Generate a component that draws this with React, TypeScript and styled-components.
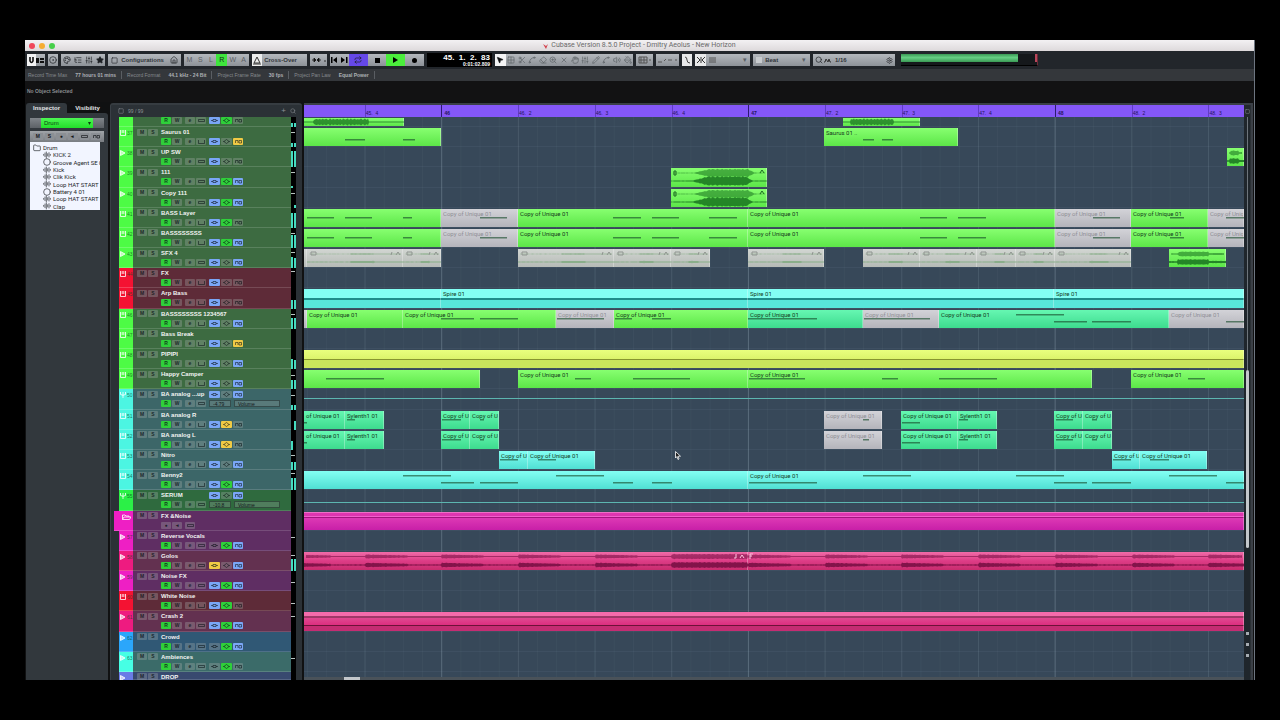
import React from "react";
import styled, { createGlobalStyle } from "styled-components";
import {
  AudioLines,
  Circle,
  CircleDot,
  Eraser,
  Folder,
  Grid2x2,
  Hand,
  House,
  ListTree,
  MousePointer2,
  PaintBucket,
  Palette,
  Pencil,
  Repeat,
  Scissors,
  Search,
  Settings,
  SlidersVertical,
  Spline,
  Square,
  Star,
  Volume2,
  X,
  ZoomIn,
} from "lucide-react";

const GlobalStyle = createGlobalStyle`
  *, *::before, *::after { box-sizing: border-box; }
  body { margin: 0; background: #000; font-family: "Liberation Sans", Arial, sans-serif; font-size: 6px; }
  button, select, input { font: inherit; color: inherit; border: 0; border-radius: 0; margin: 0; padding: 0; background: none; }
  ul { list-style: none; margin: 0; padding: 0; }
  svg { flex: none; }
`;

/* ---------- window frame ---------- */

const Page = styled.div`
  min-height: 100vh;
  display: flex;
  padding: 40px 25px;
  background: #000;
`;

const AppWindow = styled.main`
  flex: 1;
  min-width: 0;
  display: flex;
  flex-direction: column;
  background: #101112;
  border-right: 1px solid #6d7580;
`;

const TitleBar = styled.header`
  display: flex;
  align-items: center;
  height: 11px;
  padding: 0 4px;
  color: #6a6a6a;
  background: linear-gradient(#f3f1f3, #ddd9db);
`;

const Lights = styled.div`
  display: flex;
  gap: 4px;
  flex: 1;
`;

const Light = styled.button<{ $color: string }>`
  width: 6px;
  height: 6px;
  border-radius: 50%;
  background: ${(p) => p.$color};
`;

const Title = styled.h1`
  display: flex;
  align-items: center;
  gap: 3px;
  margin: 0;
  font: 400 7px/11px Roboto, sans-serif;
`;

const TitleEnd = styled.div`
  flex: 1;
`;

/* ---------- toolbar ---------- */

const Toolbar = styled.div`
  display: flex;
  align-items: center;
  height: 18px;
  padding: 0 2px;
  gap: 3px;
  background: #22262b;
  overflow: hidden;
  color: #22262a;
`;

const Group = styled.div<{ $w: number; $pad?: number }>`
  display: flex;
  flex: none;
  align-items: stretch;
  width: ${(p) => p.$w}px;
  height: 12px;
  padding: 0 ${(p) => p.$pad ?? 0}px;
  background: linear-gradient(#b4b8bd, #8d9298);
  overflow: hidden;
`;

const Tool = styled.button<{ $bg?: string; $dim?: boolean; $grow?: number; $left?: boolean }>`
  flex: ${(p) => p.$grow ?? 1};
  min-width: 0;
  display: flex;
  align-items: center;
  justify-content: ${(p) => (p.$left ? "flex-start" : "center")};
  font-size: 7px;
  line-height: 12px;
  background: ${(p) => p.$bg ?? "transparent"};
  color: ${(p) => (p.$dim ? "#5b6065" : "#1b1e22")};
`;

const ToolSelect = styled.select<{ $grow: number }>`
  flex: ${(p) => p.$grow};
  min-width: 0;
  appearance: none;
  padding: 0 2px;
  font-size: 6px;
  font-weight: 700;
  line-height: 12px;
  color: #303439;
`;

const TimeBox = styled.div`
  flex: none;
  display: flex;
  flex-direction: column;
  align-items: flex-end;
  justify-content: center;
  width: 65px;
  height: 14px;
  padding-right: 2px;
  background: #000;
  color: #fff;
  font-weight: 700;
`;

const TimeMain = styled.span`
  font-size: 8px;
  line-height: 8px;
  white-space: pre;
`;

const TimeSub = styled.span`
  font-size: 5px;
  line-height: 5px;
`;

const MasterMeter = styled.div`
  display: flex;
  flex: none;
  width: 137px;
  height: 12px;
  margin-left: 3px;
  border-bottom: 1px solid #000;
  border-right: 1px solid #6b2a38;
  padding-bottom: 3px;
  background: #15181b;
`;

const MasterLevel = styled.div`
  width: 86%;
  background: linear-gradient(#3a9a55, #66cf84 45%, #3a9a55);
`;

const MasterClip = styled.div`
  width: 2px;
  margin-left: auto;
  background: #b8465a;
`;

/* ---------- info lines ---------- */

const InfoLine = styled.dl`
  display: flex;
  align-items: center;
  height: 12px;
  margin: 0;
  padding: 0 3px;
  background: #34373b;
  white-space: nowrap;
  line-height: 12px;
`;

const InfoItem = styled.div`
  display: flex;
  height: 8px;
  line-height: 8px;
  gap: 8px;
  padding-right: 5px;
  margin-right: 5px;
  border-right: 1px solid #5a5e63;
  font-size: 5px;
`;

const InfoKey = styled.dt`
  color: #85898d;
`;

const InfoValue = styled.dd`
  margin: 0;
  color: #adb0b4;
  font-weight: 700;
`;

const NoObject = styled.p`
  margin: 0;
  height: 21px;
  padding-left: 2px;
  line-height: 20px;
  font-weight: 700;
  font-size: 5px;
  color: #8b8d90;
  background: #121213;
`;

const Body = styled.div`
  flex: 1;
  display: flex;
  min-height: 0;
  gap: 2px;
  padding-top: 1px;
  padding-right: 1px;
`;

/* ---------- inspector ---------- */

const Inspector = styled.aside`
  flex: none;
  width: 83px;
  display: flex;
  flex-direction: column;
  padding-left: 1px;
`;

const Tabs = styled.div`
  display: flex;
  height: 10px;
`;

const Tab = styled.button<{ $active?: boolean }>`
  flex: 1;
  border-radius: 3px 3px 0 0;
  background: ${(p) => (p.$active ? "#32383d" : "transparent")};
  color: #e6e7e8;
  font-weight: 700;
  font-size: 6px;
  line-height: 10px;
`;

const InspectorPanel = styled.div`
  flex: 1;
  display: flex;
  flex-direction: column;
  gap: 3px;
  padding: 5px 4px 0;
  background: #32383d;
  border-radius: 0 3px 0 0;
`;

const TrackTitle = styled.div`
  display: flex;
  justify-content: center;
  height: 10px;
  color: #0b3f10;
  background: linear-gradient(#80858a, #5c6166);
`;

const TrackTitleField = styled.div`
  display: flex;
  align-items: center;
  width: 52px;
  padding-right: 2px;
  background: linear-gradient(#4df853, #22e02a);
`;

const TrackTitleSelect = styled.select`
  flex: 1;
  min-width: 0;
  appearance: none;
  padding: 0 3px;
  line-height: 9px;
`;

const FolderBox = styled.section`
  padding-right: 4px;
`;

const FolderTools = styled.div`
  display: flex;
  align-items: center;
  gap: 2px;
  height: 11px;
  margin-right: -4px;
  padding: 0 3px;
  background: linear-gradient(#a0a4a8, #797d82);
`;

const FolderTool = styled.button`
  flex: 1;
  height: 7px;
  display: flex;
  align-items: center;
  justify-content: center;
  font-size: 5px;
  font-weight: 700;
  line-height: 7px;
  background: #8b8f94;
  color: #15181b;
`;

const FolderList = styled.ul`
  display: grid;
  grid-auto-rows: 1fr;
  height: 68px;
  padding: 2px 0 0 3px;
  overflow: hidden;
  background: #f2f5ff;
  color: #23262a;
`;

const FolderItem = styled.li<{ $root?: boolean }>`
  display: flex;
  align-items: center;
  gap: 2px;
  padding-left: ${(p) => (p.$root ? 0 : 10)}px;
  font: 400 6px/7px Roboto, "Liberation Sans", sans-serif;
  white-space: nowrap;
  min-height: 0;
`;

/* ---------- track list ---------- */

const rowTemplate = (last: number) =>
  `grid-template-rows: 10px repeat(27, minmax(20px, 1fr)) ${last}px;`;

const TrackPanel = styled.section`
  flex: none;
  width: 192px;
  display: flex;
  flex-direction: column;
  padding: 0 6px 0 3px;
  background: #2b3136;
  border-top: 2px solid #363c41;
  border-left: 1px solid #3a4046;
  border-radius: 3px 3px 0 0;
`;

const TrackHeader = styled.div`
  display: flex;
  align-items: center;
  gap: 4px;
  height: 12px;
  padding: 0 0 0 4px;
  color: #8d9196;
  font-size: 5px;
  line-height: 12px;
`;

const HeaderTool = styled.button<{ $push?: boolean }>`
  display: flex;
  margin-left: ${(p) => (p.$push ? "auto" : "0")};
  font-size: 8px;
  line-height: 8px;
`;

const TrackRows = styled.ol`
  flex: 1;
  display: grid;
  ${rowTemplate(8)}
  margin: 0;
  padding: 0;
  list-style: none;
`;

const TrackRow = styled.li`
  display: flex;
  min-height: 0;
  overflow: hidden;
`;

const Strip = styled.div<{ $color: string; $wide?: boolean }>`
  flex: none;
  display: flex;
  gap: 1px;
  width: ${(p) => (p.$wide ? 19 : 14)}px;
  margin-left: ${(p) => (p.$wide ? 0 : 5)}px;
  height: 100%;
  min-height: 10px;
  padding: ${(p) => (p.$wide ? "3px 2px 0 8px" : "3px 0 0 1px")};
  background: ${(p) => p.$color};
  border-bottom: 1px solid rgba(255, 255, 255, 0.2);
  font-size: 5px;
  line-height: 6px;
  color: rgba(10, 70, 30, 0.7);
`;

const TrackBody = styled.div<{ $color: string }>`
  flex: 1;
  min-width: 0;
  display: flex;
  flex-direction: column;
  gap: 1px;
  padding: 0 4px;
  background: ${(p) => p.$color};
  border-bottom: 1px solid rgba(255, 255, 255, 0.15);
`;

const TrackLine = styled.div<{ $indent?: boolean }>`
  display: flex;
  align-items: center;
  gap: ${(p) => (p.$indent ? 3 : 2)}px;
  height: ${(p) => (p.$indent ? 7 : 10)}px;
  flex: none;
  padding-left: ${(p) => (p.$indent ? 24 : 0)}px;
`;

const Cluster = styled.div`
  display: flex;
  gap: 1px;
  height: 7px;
`;

const STATE: Record<string, string> = {
  g: "#2fcf3a",
  b: "#7aa6f6",
  y: "#f0ca45",
  o: "rgba(170,178,174,0.32)",
};

const Mini = styled.button<{ $state?: string; $wide?: boolean }>`
  display: flex;
  align-items: center;
  justify-content: center;
  width: ${(p) => (p.$wide ? 11 : 10)}px;
  height: 7px;
  border-radius: 1px;
  background: ${(p) => STATE[p.$state ?? "o"]};
  color: rgba(8, 16, 20, 0.8);
  font-size: 5px;
  font-weight: 700;
  line-height: 7px;
`;

const TrackName = styled.span<{ $fixed?: boolean }>`
  width: ${(p) => (p.$fixed ? "47px" : "auto")};
  padding-left: 1px;
  color: #f1f3f1;
  font-weight: 700;
  font-size: 6px;
  line-height: 10px;
  white-space: nowrap;
`;

const ValueField = styled.input<{ $w: number }>`
  width: ${(p) => p.$w}px;
  height: 7px;
  padding: 0 3px;
  border: 1px solid rgba(10, 20, 20, 0.45);
  background: rgba(160, 170, 166, 0.3);
  color: #10181a;
  font-size: 5px;
  line-height: 5px;
`;

const Meter = styled.div<{ $peak?: number }>`
  flex: none;
  display: flex;
  align-items: flex-end;
  gap: 1px;
  width: 5px;
  height: 100%;
  min-height: 10px;
  background: ${(p) =>
    p.$peak ? `linear-gradient(#b9c4c2, #b9c4c2) 0 ${p.$peak}px / 4px 1px no-repeat #000` : "#000"};
`;

const MeterBar = styled.div<{ $h: number }>`
  width: 2px;
  height: ${(p) => p.$h}px;
  background: #46dcc0;
`;

/* ---------- arrangement ---------- */

const Arrange = styled.section`
  flex: 1;
  min-width: 0;
  display: grid;
  grid-template-columns: minmax(0, 1fr) 6px;
  grid-template-rows: 12px minmax(0, 1fr) 3px;
  padding-right: 1px;
  border-top: 2px solid #3a3f46;
  border-right: 2px solid #3a3f46;
  background: #2b3136;
`;

const Ruler = styled.div`
  display: grid;
  grid-template-columns: 607fr repeat(11, minmax(0, 767fr)) 356fr;
  background: #8457f8;
  overflow: hidden;
`;

const RulerMark = styled.span<{ $bar?: boolean }>`
  display: flex;
  align-items: flex-end;
  padding-left: ${(p) => (p.$bar ? 2 : 0)}px;
  border-left: 1px solid ${(p) => (p.$bar ? "#2d1a70" : "rgba(60,35,150,.5)")};
  color: #24145c;
  font-size: 5px;
  line-height: 7px;
  font-weight: ${(p) => (p.$bar ? 700 : 400)};
  white-space: pre;
`;

const LaneArea = styled.div`
  position: relative;
  display: grid;
  ${rowTemplate(5)}
  background: #374859;
`;

const Backdrop = styled.svg`
  position: absolute;
  inset: 0;
  width: 100%;
  height: 100%;
`;

const Lane = styled.div`
  position: relative;
  display: flex;
  min-height: 0;
  overflow: hidden;
  border-bottom: 1px solid rgba(160, 190, 210, 0.07);
`;

const CLIP: Record<string, string> = {
  green: "linear-gradient(#87ff70, #5ce648)",
  grey: "linear-gradient(#d3d3d8, #b4b4bb)",
  wave: "linear-gradient(#d2d6d2, #b5bab6)",
  cyan: "linear-gradient(#83fff3, #50dfd3)",
  spire: "linear-gradient(#83fff3 50%, #1f8d8a 50%, #1f8d8a 56%, #58e6da 56%)",
  mint: "linear-gradient(#66f7b2, #3ddb8e)",
  yellow: "linear-gradient(#e9ff7e, #dcf46c 48%, #87952f 48%, #87952f 54%, #c9e55c 54%)",
  magenta:
    "linear-gradient(#ee70c6 0 8%, #de35b0 8% 24%, #f160cc 24% 30%, #a3157f 30% 36%, #dc38b4 36%, #c81fa8)",
  rose: "linear-gradient(#f06ca8, #dd3c86 50%, #c82c6e)",
  roseline:
    "linear-gradient(#f56bab 0 22%, #a03868 22% 30%, #e04a92 30%, #dd3080 66%, #6e1238 66% 73%, #c52c72 73%)",
};

const Clip = styled.div<{ $kind: string }>`
  flex: none;
  margin-top: 1px;
  padding: 1px 0 0 2px;
  overflow: hidden;
  white-space: nowrap;
  background: ${(p) => CLIP[p.$kind]};
  border-right: 1px solid rgba(255, 255, 255, 0.3);
  color: ${(p) => (p.$kind === "grey" ? "#8f8f96" : "#143a1c")};
  font: 400 6px/8px Roboto, "Liberation Sans", sans-serif;
`;

const Overlay = styled.svg`
  position: absolute;
  inset: 0;
  width: 100%;
  height: 20px;
`;

const AutomationLine = styled.div<{ $top: number }>`
  flex: 1;
  height: 1px;
  margin-top: ${(p) => p.$top}px;
  background: #5cb5b0;
`;

const Cursor = styled.svg`
  position: absolute;
  left: 40%;
  top: 60%;
  width: 6px;
  height: 9px;
  margin: -2px 0 0 -5px;
`;

const ScrollColumn = styled.div`
  display: flex;
  flex-direction: column;
  align-items: center;
  background: #1f262c;
`;

const ScrollTrack = styled.div`
  flex: 253;
  width: 1px;
  background: #6d757c;
`;

const ScrollThumb = styled.div`
  flex: 177;
  width: 3px;
  border-radius: 2px;
  background: #c3c7cb;
`;

const ScrollRest = styled.div`
  flex: 109;
  display: flex;
  flex-direction: column;
  justify-content: flex-end;
  gap: 8px;
  padding-bottom: 20px;
`;

const Knob = styled.span`
  width: 3px;
  height: 3px;
  background: #a6acb2;
`;

const CornerButton = styled.button`
  display: flex;
  align-items: center;
  justify-content: center;
  background: #22282d;
  color: #9a9fa4;
`;

const HScroll = styled.div`
  display: flex;
  align-items: center;
  padding-left: 40px;
  background: #4a5259;
`;

const HThumb = styled.div`
  width: 16px;
  height: 3px;
  background: #c3c7cb;
`;

/* ---------- data ---------- */

interface Track {
  name: string;
  type: "midi" | "audio" | "auto" | "folder";
  strip: string;
  body: string;
  s: string;
  m: [number, number];
  peak: number;
  value?: string;
}

const P = {
  green: ["#4dfb45", "#3d6b41"],
  red: ["#f41232", "#5e2b38"],
  teal: ["#4cf5e2", "#3c6668"],
  serum: ["#2bf047", "#2f6a3e"],
  purple: ["#ee1fc4", "#5f2e63"],
  pink: ["#ee1b80", "#633150"],
  blue: ["#2ba6fb", "#305875"],
  aqua: ["#46ffe4", "#3b6b69"],
  indigo: ["#6a7ce6", "#38496f"],
};

const t = (
  name: string,
  type: Track["type"],
  color: keyof typeof P,
  s: string,
  m: [number, number],
  peak = 0,
  value?: string
): Track => ({ name, type, strip: P[color][0], body: P[color][1], s, m, peak, value });

const TRACKS: Track[] = [
  t("Saurus 01", "midi", "green", "boy", [4, 4], 5),
  t("UP SW", "audio", "green", "boo", [16, 16]),
  t("111", "audio", "green", "bgb", [2, 0], 5),
  t("Copy 111", "audio", "green", "bgb", [0, 3], 5),
  t("BASS Layer", "midi", "green", "bgo", [15, 15]),
  t("BASSSSSSSS", "midi", "green", "bgb", [13, 13], 5),
  t("SFX 4", "audio", "green", "bob", [11, 10], 4),
  t("FX", "midi", "red", "boo", [0, 0], 3),
  t("Arp Bass", "midi", "red", "boo", [9, 9]),
  t("BASSSSSSSS 1234567", "midi", "green", "bob", [11, 11], 5),
  t("Bass Break", "midi", "green", "boy", [0, 0]),
  t("PIPIPI", "midi", "green", "bob", [10, 9]),
  t("Happy Camper", "midi", "green", "bob", [9, 9], 6),
  t("BA analog ...up", "auto", "teal", "bob", [5, 5], 6, "-4.79"),
  t("BA analog R", "midi", "teal", "byo", [0, 9]),
  t("BA analog L", "midi", "teal", "byo", [9, 0]),
  t("Nitro", "midi", "teal", "bob", [8, 8], 5),
  t("Benny2", "midi", "teal", "bgb", [12, 12], 3),
  t("SERUM", "auto", "serum", "bob", [0, 0], 0, "-10.8"),
  t("FX &Noise", "folder", "purple", "", [0, 0]),
  t("Reverse Vocals", "audio", "purple", "ogb", [0, 0], 6),
  t("Golos", "audio", "pink", "yob", [12, 12], 4),
  t("Noise FX", "audio", "purple", "bgb", [0, 0], 11),
  t("White Noise", "midi", "red", "bgo", [0, 0], 12),
  t("Crash 2", "audio", "pink", "bgb", [0, 0], 5),
  t("Crowd", "audio", "blue", "ogb", [0, 0]),
  t("Ambiences", "audio", "aqua", "ogo", [0, 0], 6),
];

/* Clips and notes are placed on a timeline whose visible part is START..START+SPAN. */
const START = 304;
const SPAN = 940;

type ClipData = [from: number, to: number, kind: string, label?: string];
type Note = [from: number, to: number, y: number];
type Wave = [from: number, to: number, shape: string];

interface LaneData {
  clips?: ClipData[];
  notes?: Note[];
  waves?: Wave[];
  line?: number;
}

const U = "Copy of Unique 01";
const SHORT = "Copy of U";

const bass: LaneData = {
  clips: [
    [304, 441, "green"],
    [441, 518, "grey", U],
    [518, 748, "green", U],
    [748, 1055, "green", U],
    [1055, 1131, "grey", U],
    [1131, 1208, "green", U],
    [1208, 1244, "grey", "Copy of Uniq"],
  ],
  notes: [
    [307, 334, 10], [345, 372, 10], [403, 412, 10], [480, 507, 10], [613, 641, 10], [652, 679, 10],
    [709, 737, 10], [920, 947, 10], [958, 986, 10], [1093, 1120, 10], [1170, 1184, 10], [1226, 1244, 10],
  ],
};

const analog: LaneData = {
  clips: [
    [304, 345, "mint", "of Unique 01"],
    [345, 384, "mint", "Sylenth1 01"],
    [441, 470, "mint", SHORT],
    [470, 499, "mint", SHORT],
    [824, 882, "grey", U],
    [901, 958, "mint", U],
    [958, 997, "mint", "Sylenth1 01"],
    [1054, 1083, "mint", SHORT],
    [1083, 1112, "mint", SHORT],
  ],
  notes: [
    [304, 307, 13], [347, 355, 10], [442, 461, 10], [480, 484, 10], [863, 869, 10], [902, 920, 13],
    [959, 968, 10], [1056, 1073, 10], [1092, 1097, 10],
  ],
};

const copy111: LaneData = {
  clips: [[671, 767, "green"]],
  waves: [[671, 767, "swell"]],
};

const sfxSpans: [number, number][] = [
  [304, 307], [307, 403], [403, 441], [518, 614], [614, 671], [671, 710], [748, 824],
  [863, 920], [920, 977], [977, 1016], [1016, 1055], [1055, 1131],
];

const LANES: LaneData[] = [
  {
    clips: [[304, 441, "green"], [824, 958, "green", "Saurus 01 .."]],
    notes: [[345, 365, 13], [403, 415, 13], [863, 874, 13], [882, 893, 13]],
  },
  { clips: [[1227, 1244, "green"]], waves: [[1227, 1244, "burst"]] },
  copy111,
  copy111,
  bass,
  bass,
  {
    clips: [...sfxSpans.map(([a, b]): ClipData => [a, b, "wave"]), [1169, 1226, "green"]],
    waves: [...sfxSpans.slice(1).map(([a, b]): Wave => [a, b, "faint"]), [1169, 1226, "burst"]],
  },
  {},
  {
    clips: [
      [304, 441, "spire"],
      [441, 748, "spire", "Spire 01"],
      [748, 1054, "spire", "Spire 01"],
      [1054, 1244, "spire", "Spire 01"],
    ],
  },
  {
    clips: [
      [304, 307, "grey"],
      [307, 403, "green", U],
      [403, 556, "green", U],
      [556, 614, "grey", U],
      [614, 748, "green", U],
      [748, 863, "mint", U],
      [863, 939, "grey", U],
      [939, 1169, "mint", U],
      [1169, 1244, "grey", U],
    ],
    notes: [
      [441, 474, 10], [480, 518, 10], [557, 604, 10], [615, 632, 10], [652, 671, 10], [748, 817, 10],
      [864, 930, 10], [1016, 1064, 6], [1054, 1087, 13], [1092, 1131, 13], [1226, 1244, 13],
    ],
  },
  {},
  { clips: [[304, 1244, "yellow"]] },
  {
    clips: [
      [304, 480, "green"],
      [518, 748, "green", U],
      [748, 1092, "green", U],
      [1131, 1244, "green", U],
    ],
    notes: [
      [326, 384, 10], [575, 591, 10], [633, 690, 10], [749, 805, 10], [882, 898, 10], [939, 997, 10],
      [1188, 1205, 10],
    ],
  },
  { line: 9 },
  analog,
  analog,
  {
    clips: [[499, 528, "cyan", SHORT], [528, 595, "cyan", U], [1112, 1140, "cyan", SHORT], [1140, 1207, "cyan", U]],
    notes: [[500, 518, 10], [538, 556, 10], [1113, 1131, 10], [1150, 1169, 10]],
  },
  {
    clips: [[304, 748, "cyan"], [748, 1244, "cyan", U]],
    notes: [
      [403, 451, 6], [556, 604, 6], [863, 911, 6], [1016, 1064, 6], [1169, 1217, 6], [441, 474, 13],
      [480, 518, 13], [613, 633, 13], [652, 672, 13], [749, 817, 13], [1054, 1087, 13], [1092, 1131, 13],
      [1226, 1244, 13],
    ],
  },
  { line: 12 },
  { clips: [[304, 1244, "magenta"]] },
  {},
  { clips: [[304, 748, "rose"], [748, 1244, "rose"]], waves: [[304, 1244, "voice"]] },
  {},
  {},
  { clips: [[304, 1244, "roseline"]] },
  {},
  {},
];

/* ---------- drawings ---------- */

const jitter = (x: number) => 0.75 + 0.25 * Math.abs(Math.sin(x * 1.9) * Math.cos(x * 0.73 + 1));

function level(shape: string, x: number, from: number, to: number): number {
  const r = (x - from) / (to - from);
  switch (shape) {
    case "swell": {
      if (x < from + 22) return 0.5;
      if (x < from + 36) return 0.8 + ((x - from - 22) / 14) * 4.4;
      if (x < from + 76) return 5.4;
      if (x < from + 82) return 4.5 - (x - from - 76) * 0.7;
      return 0.5;
    }
    case "burst":
      return r < 0.15 ? 1 : r < 0.7 ? 3.2 : 1.4;
    case "top":
      return r < 0.1 ? 0.6 : r < 0.65 ? 2.4 + 1.4 * Math.abs(Math.sin(x * 0.9)) : 0.6;
    case "faint":
      return r < 0.45 ? 0.5 : r < 0.7 ? 1.3 : 0.6;
    default: {
      if (x > 671 && x < 748) return 3.4;
      const beat = (x - 365 + 767) % 76.7;
      return beat < 42 ? 2.8 - beat * 0.03 : 0.8;
    }
  }
}

function wavePath(from: number, to: number, mid: number, shape: string, gain: number) {
  const up: string[] = [];
  const down: string[] = [];
  for (let x = from; x <= to; x += 1) {
    const a = level(shape, x, from, to) * jitter(x) * gain;
    up.push(`${x},${(mid - a).toFixed(1)}`);
    down.unshift(`${x},${(mid + a).toFixed(1)}`);
  }
  return `M${up.join("L")}L${down.join("L")}Z`;
}

const waveColor = (shape: string) =>
  shape === "voice" ? "#7a0f45" : shape === "faint" ? "#84ac84" : "#1d7a22";

function LaneRow({ clips = [], notes = [], waves = [], line }: LaneData) {
  let end = START;
  return (
    <Lane>
      {clips.map(([from, to, kind, label]) => {
        const gap = from - end;
        end = to;
        return (
          <Clip
            key={from}
            $kind={kind}
            style={{ marginLeft: `${(gap / SPAN) * 100}%`, width: `${((to - from) / SPAN) * 100}%` }}
          >
            {label}
          </Clip>
        );
      })}
      {line !== undefined && <AutomationLine $top={line} />}
      {(notes.length > 0 || waves.length > 0) && (
        <Overlay viewBox={`${START} 0 ${SPAN} 20`} preserveAspectRatio="none" aria-hidden="true">
          {notes.map(([a, b, y]) => (
            <rect key={`${a}-${y}`} x={a} y={y - 1} width={b - a} height={1.5} fill="#164a2a" opacity={0.62} />
          ))}
          {waves.map(([a, b, shape]) => (
            <g key={a} fill={waveColor(shape)}>
              <path d={wavePath(a + 2, b - 2, shape === "voice" ? 5.5 : 6, shape, 0.8)} opacity={0.6} />
              <path d={wavePath(a, b, 14, shape, 0.9)} opacity={0.9} />
              {shape === "voice" && (
                <g stroke="#ffc4e0" fill="none" strokeWidth={1}>
                  <path d="M736 3v4M734 7h2M740 7l2-3 2 3M750 3v5M750 3h3M750 5h2" />
                </g>
              )}
              {shape === "faint" && b - a > 30 && (
                <path d={`M${a + 4} 4h5v3h-5zM${b - 12} 7l1-3M${b - 7} 7l2-3 2 3`} stroke="#8f9590" fill="none" />
              )}
              {shape === "swell" && (
                <path d={`M${a + 3} 4h2v4h-2zM${b - 7} 6l2-3 2 3`} stroke="#1d6a22" fill="none" />
              )}
            </g>
          ))}
        </Overlay>
      )}
    </Lane>
  );
}

function TypeIcon({ type }: { type: Track["type"] }) {
  const d = {
    midi: "M0.5 0V5.5H5.5V0M2.2 0V3M3.8 0V3",
    audio: "M0.5 0.5L5 3L0.5 5.5Z",
    auto: "M0.5 0V2.5Q3 4 5.5 2.5V0M3 0V6",
    folder: "M0.5 5.5V1H3L4 2H7V3M0.5 5.5L2 3H9L7.5 5.5Z",
  }[type];
  return (
    <svg width={type === "folder" ? 9 : 6} height="6" aria-hidden="true">
      <path d={d} stroke="#fff" strokeOpacity="0.8" fill={type === "audio" ? "#ffffffa0" : "none"} />
    </svg>
  );
}

const MINI_PATHS = {
  eyes: "M0 2.5H2M5 2.5H7M2 1.5H5V3.5H2Z",
  diamond: "M3.5 0.5L6 2.5L3.5 4.5L1 2.5ZM0 2.5H1M6 2.5H7",
  insert: "M0.5 4V1.5H3V4M4 1.5H6.5V4H4Z",
  keys: "M0.5 1V4.5H6.5V1",
  link: "M0.5 1.5H6.5V3.5H0.5Z",
};

function MiniIcon({ name }: { name: keyof typeof MINI_PATHS }) {
  return (
    <svg width="7" height="5" aria-hidden="true">
      <path d={MINI_PATHS[name]} fill="none" stroke="currentColor" strokeWidth="0.9" strokeOpacity="0.75" />
    </svg>
  );
}

function Sends({ s }: { s: string }) {
  return (
    <Cluster>
      <Mini $wide $state={s[0]} aria-label="Inserts"><MiniIcon name="eyes" /></Mini>
      <Mini $wide $state={s[1]} aria-label="Equalizer"><MiniIcon name="diamond" /></Mini>
      <Mini $state={s[2]} aria-label="Sends"><MiniIcon name="insert" /></Mini>
    </Cluster>
  );
}

function ReadWrite() {
  return (
    <Cluster>
      <Mini $state="g" aria-label="Read automation">R</Mini>
      <Mini aria-label="Write automation">W</Mini>
    </Cluster>
  );
}

function EditPair({ midi }: { midi: boolean }) {
  return (
    <Cluster>
      <Mini aria-label="Edit channel">e</Mini>
      <Mini aria-label={midi ? "Edit instrument" : "Freeze"}><MiniIcon name={midi ? "keys" : "link"} /></Mini>
    </Cluster>
  );
}

function TrackItem({ track, index }: { track: Track; index: number }) {
  const auto = track.type === "auto";
  const folder = track.type === "folder";
  return (
    <TrackRow>
      <Strip $color={track.strip} $wide={folder}>
        <TypeIcon type={track.type} />
        {!folder && <span>{index + 37}</span>}
      </Strip>
      <TrackBody $color={track.body}>
        <TrackLine>
          <Cluster>
            <Mini aria-label={`Mute ${track.name}`}>M</Mini>
            <Mini aria-label={`Solo ${track.name}`}>S</Mini>
          </Cluster>
          <TrackName $fixed={auto}>{track.name}</TrackName>
          {auto && <Sends s={track.s} />}
        </TrackLine>
        <TrackLine $indent>
          {folder ? (
            <>
              <Cluster>
                <Mini aria-label="Record enable">●</Mini>
                <Mini aria-label="Monitor">◂</Mini>
              </Cluster>
              <Mini aria-label="Group editing"><MiniIcon name="link" /></Mini>
            </>
          ) : (
            <>
              <ReadWrite />
              <EditPair midi={track.type === "midi"} />
              {auto ? (
                <>
                  <ValueField $w={22} aria-label={`${track.name} value`} defaultValue={track.value} />
                  <ValueField $w={46} aria-label={`${track.name} parameter`} defaultValue="Volume" />
                </>
              ) : (
                <Sends s={track.s} />
              )}
            </>
          )}
        </TrackLine>
      </TrackBody>
      <Meter $peak={track.peak}>
        <MeterBar $h={track.m[0]} />
        <MeterBar $h={track.m[1]} />
      </Meter>
    </TrackRow>
  );
}

const TOOLS: [string, React.ReactNode][] = [
  ["Range", <Grid2x2 size={8} />],
  ["Split", <Scissors size={8} />],
  ["Glue", <Spline size={8} />],
  ["Erase", <Eraser size={8} />],
  ["Zoom", <ZoomIn size={8} />],
  ["Mute", <X size={8} />],
  ["Comp", <Hand size={8} />],
  ["Time warp", <SlidersVertical size={8} />],
  ["Draw", <Pencil size={8} />],
  ["Line", <Spline size={8} />],
  ["Play tool", <Volume2 size={8} />],
  ["Color", <PaintBucket size={8} />],
];

const FOLDER_ITEMS = [
  "KICK 2",
  "Groove Agent SE 0",
  "Kick",
  "Clik Kick",
  "Loop HAT START",
  "Battery 4 01",
  "Loop HAT START 2",
  "Clap",
];

const RULER = ["45.  4", "46", "46.  2", "46.  3", "46.  4", "47", "47.  2", "47.  3", "47.  4", "48", "48.  2", "48.  3"];

const subLines = Array.from({ length: 49 }, (_, i) => 3 + i * 19.17);

function ToolbarRow() {
  return (
    <Toolbar>
      <Group $w={18}>
        <Tool $bg="#f2f2f3" aria-label="Activate project">
          <svg width="5" height="7"><path d="M1 0V4Q2.5 7 4 4V0" fill="none" stroke="#111" strokeWidth="1.6" /></svg>
        </Tool>
        <Tool aria-label="Window layout">
          <svg width="9" height="7"><path d="M0 1h3v5H0zM4 1h4v2H4zM4 4h4v2H4z" fill="#111" /></svg>
        </Tool>
      </Group>
      <Group $w={10}>
        <Tool aria-label="Constrain delay"><CircleDot size={8} /></Tool>
      </Group>
      <Group $w={44}>
        <Tool aria-label="Color events"><Palette size={8} /></Tool>
        <Tool aria-label="Show inspector"><ListTree size={8} /></Tool>
        <Tool aria-label="Show mixer"><SlidersVertical size={8} /></Tool>
        <Tool aria-label="Favourites"><Star size={8} fill="currentColor" /></Tool>
      </Group>
      <Group $w={73} $pad={2}>
        <Tool aria-label="Track versions"><Square size={7} /></Tool>
        <ToolSelect $grow={5} aria-label="Configurations"><option>Configurations</option></ToolSelect>
        <Tool aria-label="Home"><House size={8} /></Tool>
      </Group>
      <Group $w={65}>
        {["M", "S", "L", "R", "W", "A"].map((c) => (
          <Tool key={c} $dim={c !== "R"} $bg={c === "R" ? "#3ee53c" : undefined}>{c}</Tool>
        ))}
      </Group>
      <Group $w={55}>
        <Tool $bg="#eceded" aria-label="Automation panel">
          <svg width="9" height="9"><path d="M1 7L4 1L7 7ZM0 8h8" fill="none" stroke="#333" /></svg>
        </Tool>
        <ToolSelect $grow={4} aria-label="Automation mode"><option>Cross-Over</option></ToolSelect>
      </Group>
      <Group $w={17}>
        <Tool aria-label="Auto-scroll">
          <svg width="14" height="8"><path d="M0 4h3M6 4h3M2 2v4l2-2zM7 2v4L5 4zM12 5h2" fill="#111" stroke="#111" strokeWidth="0.8" /></svg>
        </Tool>
      </Group>
      <Group $w={94}>
        <Tool aria-label="Previous marker"><svg width="7" height="6"><path d="M0 0h1.5v6H0zM6 0v6L2 3z" /></svg></Tool>
        <Tool aria-label="Next marker"><svg width="7" height="6"><path d="M5 0h1.5v6H5zM0 0v6L4 3z" /></svg></Tool>
        <Tool $grow={2} $bg="#6548e8" aria-label="Cycle"><Repeat size={8} /></Tool>
        <Tool $grow={2} aria-label="Stop"><svg width="5" height="5"><path d="M0 0h5v5H0z" /></svg></Tool>
        <Tool $grow={2} $bg="#4bee3c" aria-label="Play"><svg width="5" height="6"><path d="M0 0v6L5 3z" /></svg></Tool>
        <Tool $grow={2} aria-label="Record"><svg width="5" height="5"><circle cx="2.5" cy="2.5" r="2.5" /></svg></Tool>
      </Group>
      <TimeBox>
        <TimeMain>45.  1.  2.  83</TimeMain>
        <TimeSub>0:01:02.809</TimeSub>
      </TimeBox>
      <Group $w={138}>
        <Tool $bg="#f4f4f5" aria-label="Object selection"><MousePointer2 size={8} fill="#111" /></Tool>
        {TOOLS.map(([label, icon]) => (
          <Tool key={label} $dim aria-label={label}>{icon}</Tool>
        ))}
      </Group>
      <Group $w={17}><Tool $dim aria-label="Color menu"><svg width="13" height="8"><path d="M1 1h8v6H1zM3 1v6M6 1v6M1 4h8M11 4h2" fill="none" stroke="#555" /></svg></Tool></Group>
      <Group $w={23}><Tool $dim aria-label="Nudge palette"><svg width="20" height="8"><path d="M0 6h4M6 5l2-2M10 4h4M17 4h2" stroke="#555" /></svg></Tool></Group>
      <Group $w={10}><Tool $bg="#e8e9ea" aria-label="Snap to zero crossing"><svg width="8" height="8"><path d="M2 1q2 0 2 3t3 3" fill="none" stroke="#444" /></svg></Tool></Group>
      <Group $w={55}>
        <Tool $bg="#e8e9ea" aria-label="Snap"><svg width="8" height="8"><path d="M0 1l3 3-3 3M8 1L5 4l3 3M4 1v6" fill="none" stroke="#333" /></svg></Tool>
        <Tool $grow={3} $left $dim aria-label="Snap type"><svg width="12" height="8"><path d="M3 2h7M3 4h7M3 6h7" stroke="#555" /></svg></Tool>
        <Tool $dim aria-label="Open snap types">▾</Tool>
      </Group>
      <Group $w={57} $pad={2}>
        <Tool aria-label="Grid icon"><svg width="6" height="6"><path d="M0 0h6v6H0z" fill="#c8cbce" /></svg></Tool>
        <ToolSelect $grow={4} aria-label="Grid type"><option>Beat</option></ToolSelect>
        <Tool $dim aria-label="Open grid types">▾</Tool>
      </Group>
      <Group $w={82} $pad={1}>
        <Tool aria-label="Apply quantize"><Search size={8} /></Tool>
        <Tool aria-label="Iterative quantize"><svg width="8" height="6"><path d="M0 5h1l1-3 2 3 1-3 1 3h1" fill="none" stroke="#333" /></svg></Tool>
        <ToolSelect $grow={5} aria-label="Quantize preset"><option>1/16</option></ToolSelect>
        <Tool aria-label="Quantize panel"><Settings size={7} /></Tool>
      </Group>
      <MasterMeter>
        <MasterLevel />
        <MasterClip />
      </MasterMeter>
    </Toolbar>
  );
}

const INFO = [
  ["Record Time Max", "77 hours 01 mins"],
  ["Record Format", "44.1 kHz - 24 Bit"],
  ["Project Frame Rate", "30 fps"],
  ["Project Pan Law", "Equal Power"],
];

export default function App() {
  return (
    <Page>
      <GlobalStyle />
      <AppWindow>
        <TitleBar>
          <Lights>
            <Light $color="#f0475a" aria-label="Close" />
            <Light $color="#f6ad32" aria-label="Minimize" />
            <Light $color="#47cf4a" aria-label="Zoom window" />
          </Lights>
          <Title>
            <svg width="5" height="6" aria-hidden="true"><path d="M0 1l3 2 2-2-2 5z" fill="#d3434e" /></svg>
            Cubase Version 8.5.0 Project - Dmitry Aeolus - New Horizon
          </Title>
          <TitleEnd />
        </TitleBar>
        <ToolbarRow />
        <InfoLine>
          {INFO.map(([k, v]) => (
            <InfoItem key={k}>
              <InfoKey>{k}</InfoKey>
              <InfoValue>{v}</InfoValue>
            </InfoItem>
          ))}
        </InfoLine>
        <NoObject>No Object Selected</NoObject>
        <Body>
          <Inspector>
            <Tabs role="tablist">
              <Tab role="tab" aria-selected="true" $active>Inspector</Tab>
              <Tab role="tab" aria-selected="false">Visibility</Tab>
            </Tabs>
            <InspectorPanel>
              <TrackTitle>
                <TrackTitleField>
                  <TrackTitleSelect aria-label="Track"><option>Drum</option></TrackTitleSelect>
                  <svg width="3" height="3" aria-hidden="true"><path d="M0 0h3L1.5 3z" fill="currentColor" /></svg>
                </TrackTitleField>
              </TrackTitle>
              <FolderBox>
                <FolderTools>
                  <FolderTool aria-label="Mute folder">M</FolderTool>
                  <FolderTool aria-label="Solo folder">S</FolderTool>
                  <FolderTool aria-label="Record enable folder">●</FolderTool>
                  <FolderTool aria-label="Monitor folder">◂</FolderTool>
                  <FolderTool aria-label="Group editing"><MiniIcon name="link" /></FolderTool>
                  <FolderTool aria-label="Lock"><MiniIcon name="insert" /></FolderTool>
                </FolderTools>
                <FolderList>
                  <FolderItem $root><Folder size={8} />Drum</FolderItem>
                  {FOLDER_ITEMS.map((name, i) => (
                    <FolderItem key={name}>
                      {i === 1 || i === 5 ? <Circle size={8} /> : <AudioLines size={8} />}
                      {name}
                    </FolderItem>
                  ))}
                </FolderList>
              </FolderBox>
            </InspectorPanel>
          </Inspector>

          <TrackPanel>
            <TrackHeader>
              <Square size={6} />
              <span>99 / 99</span>
              <HeaderTool $push aria-label="Add track">+</HeaderTool>
              <HeaderTool aria-label="Find track"><Search size={6} /></HeaderTool>
            </TrackHeader>
            <TrackRows>
              <TrackRow>
                <Strip $color={P.green[0]} />
                <TrackBody $color={P.green[1]}>
                  <TrackLine $indent>
                    <ReadWrite />
                    <EditPair midi={false} />
                    <Sends s="bgo" />
                  </TrackLine>
                </TrackBody>
                <Meter><MeterBar $h={4} /><MeterBar $h={4} /></Meter>
              </TrackRow>
              {TRACKS.map((track, i) => (
                <TrackItem key={track.name} track={track} index={i} />
              ))}
              <TrackRow>
                <Strip $color={P.indigo[0]}><TypeIcon type="audio" /></Strip>
                <TrackBody $color={P.indigo[1]}>
                  <TrackLine>
                    <Cluster><Mini>M</Mini><Mini>S</Mini></Cluster>
                    <TrackName>DROP</TrackName>
                  </TrackLine>
                </TrackBody>
                <Meter />
              </TrackRow>
            </TrackRows>
          </TrackPanel>

          <Arrange>
            <Ruler>
              <span />
              {RULER.map((label) => (
                <RulerMark key={label} $bar={label.length === 2}>{label}</RulerMark>
              ))}
            </Ruler>
            <CornerButton aria-label="Ruler display"><Square size={5} /></CornerButton>
            <LaneArea>
              <Backdrop viewBox={`0 0 ${SPAN} 100`} preserveAspectRatio="none" aria-hidden="true">
                {subLines.map((x, i) => (
                  <rect
                    key={x}
                    x={x}
                    width={1}
                    height={100}
                    fill="#c9dbe6"
                    opacity={i % 16 === 7 ? 0.25 : i % 4 === 3 ? 0.12 : 0.04}
                  />
                ))}
              </Backdrop>
              <Lane>
                <Clip $kind="green" style={{ width: `${(100 / SPAN) * 100}%` }} />
                <Clip
                  $kind="green"
                  style={{ marginLeft: `${(439 / SPAN) * 100}%`, width: `${(77 / SPAN) * 100}%` }}
                />
                <Overlay viewBox={`${START} 0 ${SPAN} 20`} preserveAspectRatio="none" fill="#1d7a22" aria-hidden="true">
                  <path d={wavePath(304, 404, 5, "top", 1)} opacity={0.8} />
                  <path d={wavePath(843, 920, 5, "top", 1)} opacity={0.8} />
                </Overlay>
              </Lane>
              {LANES.map((lane, i) => (
                <LaneRow key={i} {...lane} />
              ))}
              <Cursor viewBox="0 0 6 9" aria-hidden="true">
                <path d="M0.5 0.5V7L2 5.500L3 8.5L4 8L3.2 5.2H5.5Z" fill="#222" stroke="#fff" strokeWidth="0.8" />
              </Cursor>
            </LaneArea>
            <ScrollColumn>
              <ScrollTrack />
              <ScrollThumb />
              <ScrollRest><Knob /><Knob /><Knob /></ScrollRest>
            </ScrollColumn>
            <HScroll><HThumb /></HScroll>
            <ScrollColumn />
          </Arrange>
        </Body>
      </AppWindow>
    </Page>
  );
}
